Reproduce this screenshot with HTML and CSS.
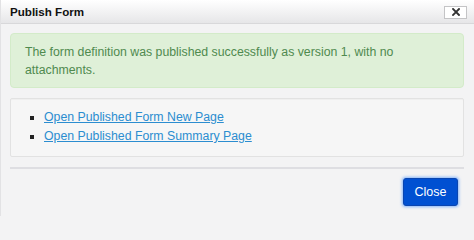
FILE: index.html
```html
<!DOCTYPE html>
<html>
<head>
<meta charset="utf-8">
<link rel="stylesheet" href="styles.css">
</head>
<body>
<div class="modal">
  <div class="header">
    <span class="title">Publish Form</span>
    <span class="xbtn"><svg width="8" height="8" viewBox="0 0 8 8"><path d="M1 1L7 7M7 1L1 7" stroke="#333" stroke-width="1.9" stroke-linecap="square"/></svg></span>
  </div>
  <div class="content">
    <div class="alert">The form definition was published successfully as version 1, with no attachments.</div>
    <div class="well">
      <ul class="links">
        <li><a href="#">Open Published Form New Page</a></li>
        <li><a href="#">Open Published Form Summary Page</a></li>
      </ul>
    </div>
    <div class="sep"></div>
    <div class="footer">
      <button class="btn">Close</button>
    </div>
  </div>
</div>
</body>
</html>
```
FILE: styles.css
```css
html, body {
  margin: 0;
  padding: 0;
  background: #f3f3f4;
}
.modal {
  width: 474px;
  height: 216px;
  box-sizing: border-box;
  background: #f3f3f4;
  border-left: 1px solid #e2e2e4;
  font-family: "Liberation Sans", Arial, Helvetica, sans-serif;
  overflow: hidden;
}
.header {
  height: 24px;
  box-sizing: border-box;
  border-bottom: 1px solid #d8d8da;
  background: linear-gradient(#ffffff, #e6e6e8);
  display: flex;
  align-items: center;
  justify-content: space-between;
  padding: 0 7px 0 9px;
}
.title {
  font-weight: bold;
  font-size: 11.6px;
  color: #111;
  margin-top: -1px;
}
.xbtn {
  width: 23px;
  height: 13px;
  box-sizing: border-box;
  border: 1px solid #c4c4c6;
  background: #fff;
  display: flex;
  align-items: center;
  justify-content: center;
  margin-top: 1px;
}
.content {
  padding: 9px 10px 0 9px;
}
.alert {
  background: #dff0d8;
  border: 1px solid #d3ebc9;
  border-radius: 4px;
  color: #4f8a4f;
  font-size: 12.3px;
  line-height: 18px;
  padding: 9px 14px 8px 14px;
}
.well {
  margin-top: 10px;
  background: #f6f6f6;
  border: 1px solid #e2e2e2;
  border-radius: 2px;
  box-shadow: inset 0 1px 1px rgba(0,0,0,0.03);
  padding: 9px 9px 10px 9px;
}
.links {
  margin: 0;
  padding-left: 24px;
  list-style: square;
  font-size: 12.3px;
  line-height: 19px;
  color: #222;
}
.links a {
  color: #2b8dd0;
  text-decoration: underline;
}
.sep {
  margin-top: 10px;
  height: 2px;
  background: #dedee2;
}
.footer {
  display: flex;
  justify-content: flex-end;
  padding: 9px 6px 0 0;
}
.btn {
  width: 55px;
  height: 28px;
  background: #0050d2;
  border: 1px solid #0a45b0;
  border-radius: 3px;
  color: #fff;
  font-family: "Liberation Sans", Arial, Helvetica, sans-serif;
  font-size: 12.5px;
  box-shadow: 0 0 3px 1px rgba(60,140,255,0.6);
  padding: 0;
}
```
